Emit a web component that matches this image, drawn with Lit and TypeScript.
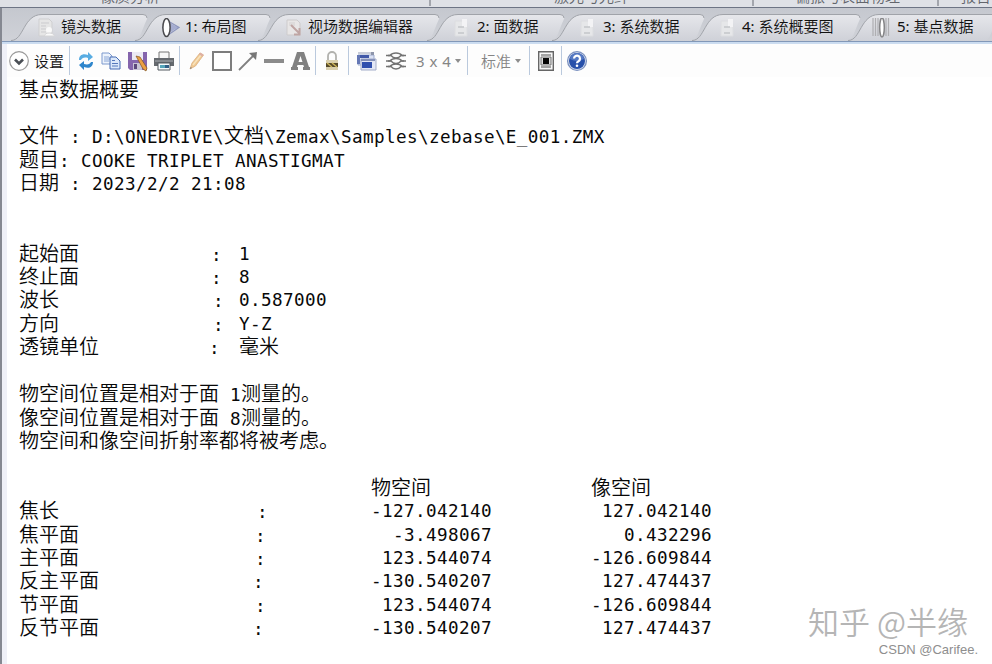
import { LitElement, html, svg, css } from "lit";
import { customElement, property } from "lit/decorators.js";

interface Tab {
  index?: string;
  label: string;
  icon: string;
  width: number;
  iconX: number;
  textX: number;
}

const TABS: Tab[] = [
  { label: "镜头数据", icon: "sheet", width: 124, iconX: 26, textX: 50 },
  { index: "1: ", label: "布局图", icon: "lens", width: 123, iconX: 26, textX: 50 },
  { label: "视场数据编辑器", icon: "field", width: 169, iconX: 27, textX: 50 },
  { index: "2: ", label: "面数据", icon: "doc", width: 125, iconX: 26, textX: 50 },
  { index: "3: ", label: "系统数据", icon: "doc", width: 140, iconX: 27, textX: 51 },
  { index: "4: ", label: "系统概要图", icon: "doc", width: 156, iconX: 27, textX: 50 },
  { index: "5: ", label: "基点数据", icon: "cardinal", width: 137, iconX: 24, textX: 49 },
];

const tabIcons: Record<string, unknown> = {
  sheet: svg`<path d="M2 1h10l3 3v14H2z" fill="#e6e6e6" stroke="#cfcfd1"/><path d="M4 5h8M4 8h5M4 11h5M4 14h5" stroke="#cbcbce"/><circle cx="12" cy="12" r="3" fill="#f9f9f9"/><path d="M7.500 18c0-4 9-4 10 0z" fill="#fafafa" stroke="#d6d6d8"/>`,
  lens: svg`<path d="M7 3L18 9.500L7 17M1 9.500h17" fill="none" stroke="#8d96bd" stroke-width="1.300"/><path d="M9 5l8 4.500l-8 5z" fill="#a5acd0"/><ellipse cx="5.500" cy="9.500" rx="3.600" ry="9" fill="#fff" stroke="#4b4b4f" stroke-width="1.500"/>`,
  field: svg`<path d="M2 2h10l3 3v12H2z" fill="#e8e6e6" stroke="#cdcbcc"/><path d="M4 5h6M4 7h6" stroke="#d3d0d0"/><path d="M6 7l8 8M14.500 10v6.500H9" fill="none" stroke="#bfa5a3" stroke-width="2"/>`,
  doc: svg`<path d="M2 3h9l3 3v12H2z" fill="#e6e7e9" stroke="#dcdde0"/><path d="M9 1h5v8H9z" fill="#f3f3f5"/><path d="M5 9h6M5 15h6" stroke="#c4c6c9" stroke-width="1.500"/>`,
  cardinal: svg`<path d="M1 0v18M3.500 0v18M6 0v18M14 0v18M16.500 0v18" stroke="#aeaeb1" stroke-width="1.200"/><ellipse cx="10" cy="9.500" rx="2.300" ry="9.500" fill="#fff" stroke="#858587" stroke-width="1.500"/>`,
};

@customElement("window-tab")
class WindowTab extends LitElement {
  @property({ attribute: false }) tab!: Tab;

  static styles = css`
    :host {
      display: block;
      height: 34px;
      flex: none;
      position: relative;
    }
    .frame {
      position: absolute;
      left: 0;
      top: 0;
      height: 34px;
      overflow: visible;
    }
    .content {
      position: relative;
      display: flex;
      height: 34px;
      white-space: nowrap;
    }
    .icon {
      width: 19px;
      height: 20px;
      flex: none;
      margin-top: 10px;
    }
    .label {
      font: 350 15px/20px "Noto Sans CJK SC", sans-serif;
      margin-top: 8px;
      color: #111;
      white-space: pre;
    }
    .index {
      font-family: "Noto Sans", sans-serif;
      font-weight: 400;
    }
  `;

  render() {
    const { width: w, iconX, textX, icon, label, index } = this.tab;
    const left = "M0 32.500C13 32.500 12 6.500 31 6.500";
    return html`
      <svg class="frame" width=${w + 14} height="34">
        <defs>
          <linearGradient id="g" x1="0" y1="0" x2="0" y2="1">
            <stop offset="0" stop-color="#e6e7eb" />
            <stop offset="1" stop-color="#cfd1d8" />
          </linearGradient>
        </defs>
        <path d="${left}H${w + 8}Q${w + 13} 6.500 ${w + 12} 11C${w + 6} 24 ${w + 6} 30 ${w} 32.500Z" fill="url(#g)" />
        <path d="${left}H${w + 8}Q${w + 12} 6.500 ${w + 12} 10" fill="none" stroke="#a0a3a9" />
      </svg>
      <div class="content">
        <svg class="icon" viewBox="0 0 19 20" style="margin-left:${iconX}px">${tabIcons[icon]}</svg>
        <span class="label" style="margin-left:${textX - iconX - 19}px">${index ? html`<span class="index">${index}</span>` : ""}${label}</span>
      </div>
    `;
  }
}

@customElement("app-root")
class AppRoot extends LitElement {
  static styles = css`
    :host {
      display: flex;
      flex-direction: column;
      box-sizing: border-box;
      width: 992px;
      height: 664px;
      background: #fff;
      overflow: hidden;
      position: relative;
      font-family: "Noto Sans CJK SC", sans-serif;
    }
    .ribbon {
      display: grid;
      grid-template-columns: 431px 323px 185px 53px;
      height: 8px;
      flex: none;
      box-sizing: border-box;
      background: #dfe1e6;
      border-bottom: 1px solid #6d7484;
      overflow: hidden;
    }
    .group {
      height: 6px;
      border-right: 2px solid #a3a6ad;
      box-sizing: border-box;
      overflow: hidden;
    }
    .group span {
      display: block;
      font-size: 15px;
      font-weight: 350;
      line-height: 20px;
      margin-top: -14px;
      color: #63666c;
      white-space: nowrap;
    }
    .g1 { padding-left: 100px; }
    .g2 { padding-left: 123px; }
    .g3 { padding-left: 41px; }
    .g4 { padding-left: 22px; border: 0; }
    .window {
      flex: 1;
      border-left: 2px solid #858891;
      min-height: 0;
      display: flex;
      flex-direction: column;
    }
    .tabs {
      display: flex;
      height: 36px;
      flex: none;
      box-sizing: border-box;
      padding-left: 9px;
      background: linear-gradient(#c5c8cf, #d0d2d8);
      border-bottom: 2px solid #cbdcf0;
      box-shadow: inset 0 -1px #8298b8;
      overflow: hidden;
    }
    .pane {
      flex: 1;
      border-left: 5px solid #eff0f7;
      min-height: 0;
    }
    .toolbar {
      display: grid;
      grid-template-columns:
        29px 33px 9px 23px 27px 26px 25px 10px 23px 26px 26px 27px 24px 10px
        23px 9px 29px 30px 51px 14px 48px 9px 23px 5px 24px;
      height: 33px;
      align-items: center;
      justify-items: start;
      background: #fdfdfd;
    }
    .toolbar svg {
      display: block;
      overflow: visible;
    }
    .sep {
      width: 1px;
      height: 29px;
      background: #bac9dd;
    }
    .text {
      font-size: 15px;
      font-weight: 350;
      line-height: 20px;
      color: #111;
      white-space: pre;
    }
    .first { margin-left: -2px; }
    .disabled {
      color: #858585;
      display: flex;
      align-items: center;
      gap: 4px;
    }
    .matrix {
      font-family: "Noto Sans", sans-serif;
      font-weight: 400;
      word-spacing: 1px;
    }
    .caret {
      border: 3.5px solid transparent;
      border-top: 4px solid #8d8d8d;
      border-bottom: 0;
    }
    .report {
      font-family: "DejaVu Sans Mono", "Noto Sans CJK SC", monospace;
      font-size: 17.6px;
      letter-spacing: 0.404px;
      line-height: 23.43px;
      padding: 1.6px 0 0 12px;
      color: #080808;
      white-space: pre;
    }
    .line {
      height: 23.43px;
      display: grid;
      grid-template-columns: 220px 1fr;
    }
    .line.full { display: block; }
    .line.table { grid-template-columns: 352px 220px 1fr; }
    .cjk {
      font-family: "Noto Sans CJK SC", sans-serif;
      font-size: 20px;
      font-weight: 350;
      letter-spacing: 0;
      line-height: 20px;
    }
    .marks {
      position: absolute;
      right: 14px;
      bottom: 6px;
      display: flex;
      flex-direction: column;
      align-items: flex-end;
    }
    .mark {
      font-size: 31px;
      font-weight: 350;
      line-height: 36px;
      color: #b5b5b5;
      margin: 0 10px 3px 0;
    }
    .credit {
      font: 13px/16px "Liberation Sans", sans-serif;
      color: #8e8e8e;
    }
  `;

  private mixed(text: string) {
    return text
      .split(/([\u3000-\u9fff]+)/)
      .map((s) => (/[\u3000-\u9fff]/.test(s) ? html`<span class="cjk">${s}</span>` : s));
  }

  private full(text = "") {
    return html`<div class="line full">${this.mixed(text)}</div>`;
  }

  private pair(label: string, value: string) {
    return html`<div class="line"><span>${this.mixed(label)}</span><span>${this.mixed(value)}</span></div>`;
  }

  private row(label: string, a: string, b: string) {
    return html`<div class="line table"><span>${this.mixed(label)}</span><span>${this.mixed(a)}</span><span>${this.mixed(b)}</span></div>`;
  }

  render() {
    const sep = html`<i class="sep"></i>`;
    return html`
      <div class="ribbon">
        <div class="group g1"><span>像质分析</span></div>
        <div class="group g2"><span>激光与光纤</span></div>
        <div class="group g3"><span>偏振与表面物理</span></div>
        <div class="group g4"><span>报告</span></div>
      </div>
      <div class="window">
        <div class="tabs">
          ${TABS.map((t) => html`<window-tab .tab=${t} style="width:${t.width}px"></window-tab>`)}
        </div>
        <div class="pane">
          <div class="toolbar">
            <svg width="24" height="22" viewBox="0 0 24 22"><circle cx="12" cy="11" r="9.300" fill="#fff" stroke="#9a9a9a" stroke-width="1.200"/><path d="M8 9.500l4 4l4-4" fill="none" stroke="#4a4f55" stroke-width="2.600"/></svg>
            <span class="text first">设置</span>
            ${sep}
            <svg width="16" height="20" viewBox="0 0 16 20"><path d="M1 9C1 4 5 2 10 4V1l5 5l-5 4V7C6 6 4 7 3 9z" fill="#58ace2"/><path d="M15 11c0 5-4 7-9 5v3l-5-5l5-4v3c4 1 6 0 7-2z" fill="#2f86cc"/></svg>
            <svg width="20" height="18" viewBox="0 0 20 18"><path d="M1 1h7l3 3v8H1z" fill="#edf3fc" stroke="#7c99cd"/><path d="M3 5h5M3 7h6M3 9h5" stroke="#8aa6d6"/><path d="M9 5h6l4 4v8H9z" fill="#dbe8fa" stroke="#456bb3"/><path d="M11 8.500h3M11 11.500h6M11 14h6" stroke="#5578bb"/></svg>
            <svg width="20" height="20" viewBox="0 0 20 20"><path d="M0 1h19v18H2l-2-2z" fill="#8565ad"/><path d="M4 1h11v8H4z" fill="#eceaf4"/><path d="M5 12h9v7H5z" fill="#c8c3d5"/><path d="M6 13h3v5H6z" fill="#5b477b"/><path d="M8 5l4 1l7 11l-1 3l-3-2z" fill="#eca043" stroke="#805420" stroke-width=".7"/></svg>
            <svg width="20" height="20" viewBox="0 0 20 20"><path d="M5 1h10v7H5z" fill="#f7f7f7" stroke="#777"/><path d="M0 7h20v8H0z" fill="#65696e"/><path d="M1 10h18" stroke="#a9adb1"/><path d="M4 12h12v7H4z" fill="#f6fafc" stroke="#555b61"/><path d="M6 14h5v3H6z" fill="#56a6bb"/><path d="M11 14h4v3h-4z" fill="#315e86"/></svg>
            ${sep}
            <svg width="17" height="18" viewBox="0 0 17 18"><path d="M1 17l2-6l8-10l3.500 2l-8 11z" fill="#efc892" stroke="#dcb080" stroke-width=".8"/><path d="M4 13l8-10" stroke="#f8e3bd" stroke-width="1.500"/><path d="M11 .5l3.500 2l-1 2l-3.500-2z" fill="#deb0a3"/><path d="M1 17l.7-2l1.300 1z" fill="#777"/></svg>
            <svg width="20" height="20" viewBox="0 0 20 20"><path d="M1 1h18v18H1z" fill="#fff" stroke="#7d7d7d" stroke-width="2"/></svg>
            <svg width="20" height="20" viewBox="0 0 20 20"><path d="M1 19L16 4" stroke="#808080" stroke-width="1.800"/><path d="M11 2l8-1l-1 8z" fill="#777"/></svg>
            <svg width="20" height="20" viewBox="0 0 20 20"><path d="M0 10h20" stroke="#8b8b8b" stroke-width="4"/></svg>
            <svg width="19" height="18" viewBox="0 0 19 18"><path fill-rule="evenodd" d="M6 0h7l5 15h1v3h-7v-3h1l-.6-2H6.500l-.6 2H7v3H0v-3h1zM9.500 4l-2 6h4z" fill="#818181"/></svg>
            ${sep}
            <svg width="14" height="20" viewBox="0 0 14 20"><path d="M3 10V5a4 4 0 0 1 8 0v5" fill="none" stroke="#b2b2ae" stroke-width="1.800"/><path d="M1 9h12v10H1z" fill="#d9cfae"/><path d="M1 12h12v4H1z" fill="#55482a"/><path d="M2 12l5 4M7 12l5 4" stroke="#cbb45a" stroke-width="1.500"/></svg>
            ${sep}
            <svg width="20" height="20" viewBox="0 0 20 20"><path d="M1 4h16v10H1z" fill="#dbe1f3" stroke="#9baacd"/><path d="M0 4h12v3H0z" fill="#4057a7"/><path d="M0 4h3v9H0z" fill="#6578b5"/><path d="M1 1h13v2H1z" fill="#c9cdd8"/><path d="M14 1h3v3h-3z" fill="#8d95aa"/><path d="M4 8h15v11H4z" fill="#e3e7f5" stroke="#a3adc9"/><path d="M4 8h14v2H4z" fill="#8490b8"/><path d="M5 11h10v6H5z" fill="#3150ae"/></svg>
            <svg width="20" height="18" viewBox="0 0 20 18"><g fill="none" stroke="#737373" stroke-width="1.400"><path d="M0 3.500h4q2-2.500 6-2.500t6 2.500h4M0 9h4q2-2.500 6-2.500T16 9h4M0 14.500h4Q6 12 10 12t6 2.500h4"/><path d="M2 3.500h3Q7 6 10 6t5-2.500h3M2 9h3q2 2.500 5 2.500T15 9h3M2 14.500h3Q7 17 10 17t5-2.500h3"/></g></svg>
            <span class="text disabled matrix">3 x 4<i class="caret"></i></span>
            ${sep}
            <span class="text disabled">标准<i class="caret"></i></span>
            ${sep}
            <svg width="16" height="20" viewBox="0 0 16 20"><path d="M.7.700h14.600v18.600H.7z" fill="#f7f7f7" stroke="#666" stroke-width="1.400"/><path d="M3 3h10v2H3zM3 15h10v2H3z" fill="#a3a3a3"/><path d="M3 6h10v8H3z" fill="#ddd" stroke="#777"/><path d="M5 7h6v6H5z" fill="#060606"/></svg>
            ${sep}
            <svg width="22" height="22" viewBox="0 0 22 22"><circle cx="11" cy="11" r="9.400" fill="#e3e9f4" stroke="#7b91bf" stroke-width="1.300"/><circle cx="11" cy="11" r="8" fill="#2750aa"/><path d="M4 9a7 6 0 0 1 14 0q-7 4-14 0z" fill="#5478c3"/><path d="M8 8.500a3 3 0 1 1 4.500 2.700q-1.500.8-1.500 2" fill="none" stroke="#fff" stroke-width="2.200"/><circle cx="11" cy="15.700" r="1.300" fill="#fff"/></svg>
          </div>
          <div class="report">${this.full("基点数据概要")}${this.full()}${this.full("文件 : D:\\ONEDRIVE\\文档\\Zemax\\Samples\\zebase\\E_001.ZMX")}${this.full("题目: COOKE TRIPLET ANASTIGMAT")}${this.full("日期 : 2023/2/2 21:08")}${this.full()}${this.full()}${this.pair("起始面            :", "1")}${this.pair("终止面            :", "8")}${this.pair("波长              :", "0.587000")}${this.pair("方向              :", "Y-Z")}${this.pair("透镜单位          :", "毫米")}${this.full()}${this.full("物空间位置是相对于面 1测量的。")}${this.full("像空间位置是相对于面 8测量的。")}${this.full("物空间和像空间折射率都将被考虑。")}${this.full()}${this.row("", "物空间", "像空间")}${this.row("焦长                  :", "-127.042140", " 127.042140")}${this.row("焦平面                :", "  -3.498067", "   0.432296")}${this.row("主平面                :", " 123.544074", "-126.609844")}${this.row("反主平面              :", "-130.540207", " 127.474437")}${this.row("节平面                :", " 123.544074", "-126.609844")}${this.row("反节平面              :", "-130.540207", " 127.474437")}</div>
        </div>
      </div>
      <div class="marks">
        <span class="mark">知乎 @半缘</span>
        <span class="credit">CSDN @Carifee.</span>
      </div>
    `;
  }
}
